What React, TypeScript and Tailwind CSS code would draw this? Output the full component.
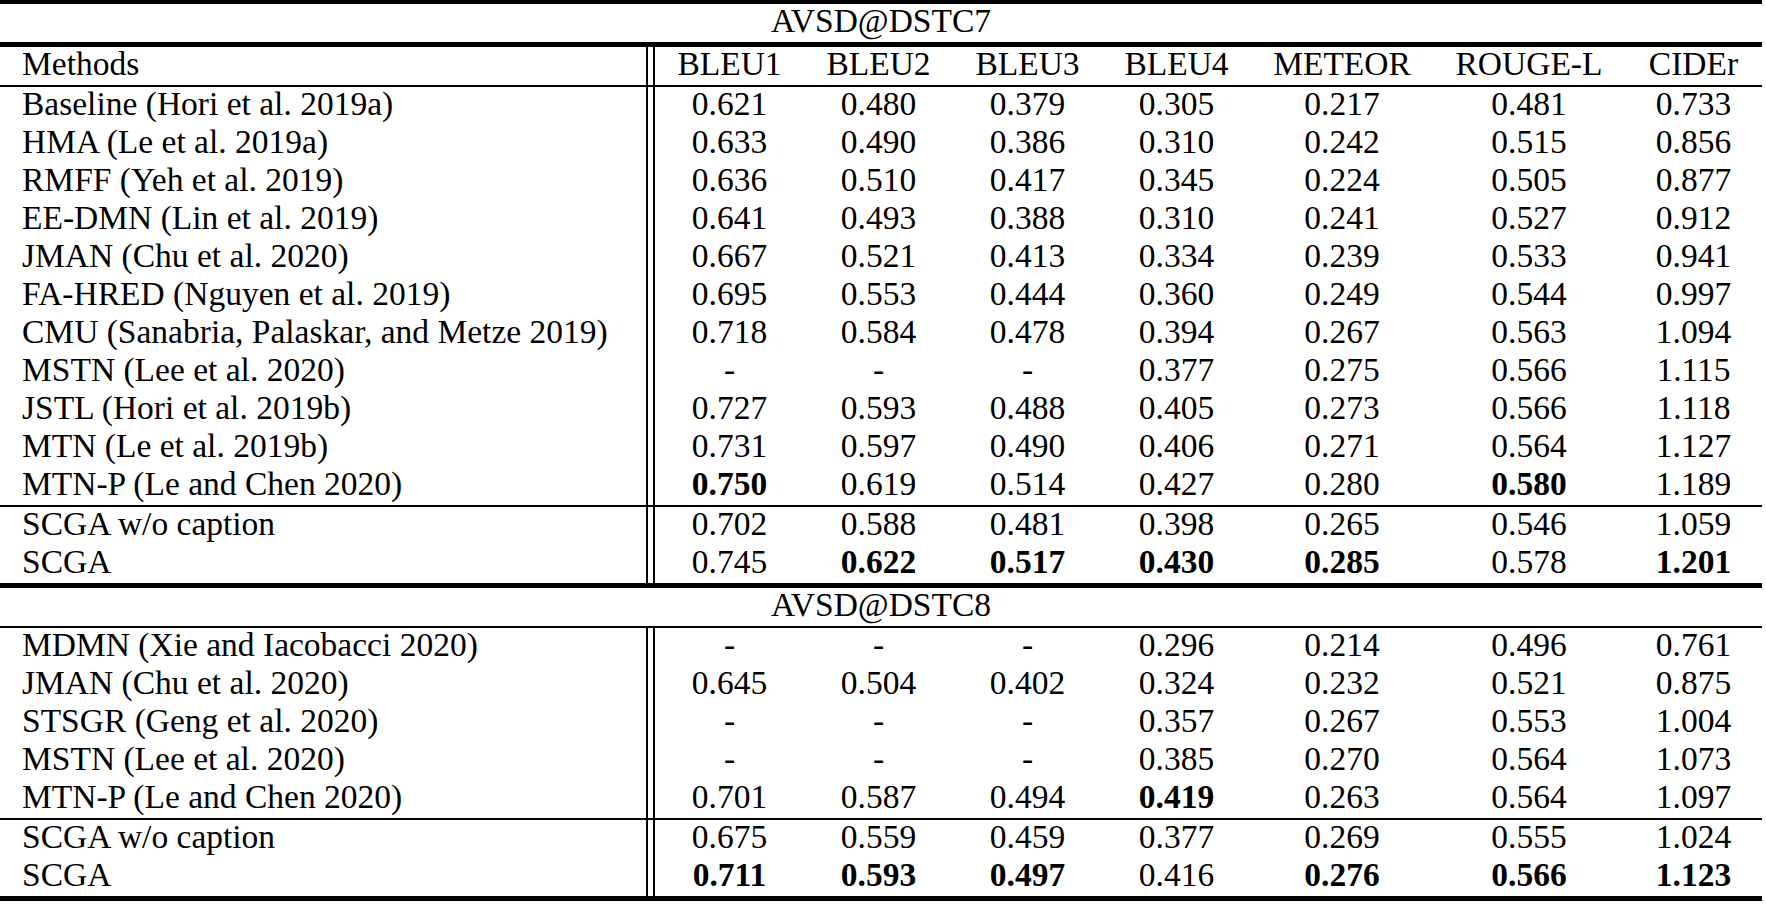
import React from "react";

type Row = { name: string; vals: string[] };

// column widths after the double rule, written out so tailwind picks them up
const colW = ["w-[149px]", "w-[149px]", "w-[149px]", "w-[149px]", "w-[182px]", "w-[192px]", "w-[137px]"];

const headers = ["BLEU1", "BLEU2", "BLEU3", "BLEU4", "METEOR", "ROUGE-L", "CIDEr"];

// a leading "*" marks the best score (bold)
const dstc7: Row[] = [
  { name: "Baseline (Hori et al. 2019a)", vals: ["0.621", "0.480", "0.379", "0.305", "0.217", "0.481", "0.733"] },
  { name: "HMA (Le et al. 2019a)", vals: ["0.633", "0.490", "0.386", "0.310", "0.242", "0.515", "0.856"] },
  { name: "RMFF (Yeh et al. 2019)", vals: ["0.636", "0.510", "0.417", "0.345", "0.224", "0.505", "0.877"] },
  { name: "EE-DMN (Lin et al. 2019)", vals: ["0.641", "0.493", "0.388", "0.310", "0.241", "0.527", "0.912"] },
  { name: "JMAN (Chu et al. 2020)", vals: ["0.667", "0.521", "0.413", "0.334", "0.239", "0.533", "0.941"] },
  { name: "FA-HRED (Nguyen et al. 2019)", vals: ["0.695", "0.553", "0.444", "0.360", "0.249", "0.544", "0.997"] },
  { name: "CMU (Sanabria, Palaskar, and Metze 2019)", vals: ["0.718", "0.584", "0.478", "0.394", "0.267", "0.563", "1.094"] },
  { name: "MSTN (Lee et al. 2020)", vals: ["-", "-", "-", "0.377", "0.275", "0.566", "1.115"] },
  { name: "JSTL (Hori et al. 2019b)", vals: ["0.727", "0.593", "0.488", "0.405", "0.273", "0.566", "1.118"] },
  { name: "MTN (Le et al. 2019b)", vals: ["0.731", "0.597", "0.490", "0.406", "0.271", "0.564", "1.127"] },
  { name: "MTN-P (Le and Chen 2020)", vals: ["*0.750", "0.619", "0.514", "0.427", "0.280", "*0.580", "1.189"] },
];

const dstc7Ours: Row[] = [
  { name: "SCGA w/o caption", vals: ["0.702", "0.588", "0.481", "0.398", "0.265", "0.546", "1.059"] },
  { name: "SCGA", vals: ["0.745", "*0.622", "*0.517", "*0.430", "*0.285", "0.578", "*1.201"] },
];

const dstc8: Row[] = [
  { name: "MDMN (Xie and Iacobacci 2020)", vals: ["-", "-", "-", "0.296", "0.214", "0.496", "0.761"] },
  { name: "JMAN (Chu et al. 2020)", vals: ["0.645", "0.504", "0.402", "0.324", "0.232", "0.521", "0.875"] },
  { name: "STSGR (Geng et al. 2020)", vals: ["-", "-", "-", "0.357", "0.267", "0.553", "1.004"] },
  { name: "MSTN (Lee et al. 2020)", vals: ["-", "-", "-", "0.385", "0.270", "0.564", "1.073"] },
  { name: "MTN-P (Le and Chen 2020)", vals: ["0.701", "0.587", "0.494", "*0.419", "0.263", "0.564", "1.097"] },
];

const dstc8Ours: Row[] = [
  { name: "SCGA w/o caption", vals: ["0.675", "0.559", "0.459", "0.377", "0.269", "0.555", "1.024"] },
  { name: "SCGA", vals: ["*0.711", "*0.593", "*0.497", "0.416", "*0.276", "*0.566", "*1.123"] },
];

function TableRow({ name, vals }: Row) {
  return (
    <div className="flex h-[38px] leading-[34px]">
      <div className="w-[646px] pl-[22px] whitespace-nowrap">{name}</div>
      <div className="w-[9px] border-x-2 border-black" />
      {vals.map((v, i) => {
        const bold = v.startsWith("*");
        return (
          <div key={i} className={`${colW[i]} text-center ${bold ? "font-bold" : ""}`}>
            {bold ? v.slice(1) : v}
          </div>
        );
      })}
    </div>
  );
}

function Title({ text }: { text: string }) {
  return <div className="h-[38px] leading-[34px] text-center">{text}</div>;
}

const ThinRule = () => <div className="h-[2px] bg-black" />;
const ThickRule = () => <div className="h-[5px] bg-black" />;

export default function App() {
  return (
    <div className="min-h-screen bg-white">
      <div className="w-[1762px] text-[33.5px] text-black font-[family-name:'Liberation_Serif',serif]">
        <div className="h-[4px] bg-black" />
        <Title text="AVSD@DSTC7" />
        <ThickRule />
        <TableRow name="Methods" vals={headers} />
        <ThinRule />
        {dstc7.map((r) => (
          <TableRow key={r.name} {...r} />
        ))}
        <ThinRule />
        {dstc7Ours.map((r) => (
          <TableRow key={r.name} {...r} />
        ))}
        <ThickRule />
        <Title text="AVSD@DSTC8" />
        <ThinRule />
        {dstc8.map((r) => (
          <TableRow key={r.name} {...r} />
        ))}
        <ThinRule />
        {dstc8Ours.map((r) => (
          <TableRow key={r.name} {...r} />
        ))}
        <ThickRule />
      </div>
    </div>
  );
}
